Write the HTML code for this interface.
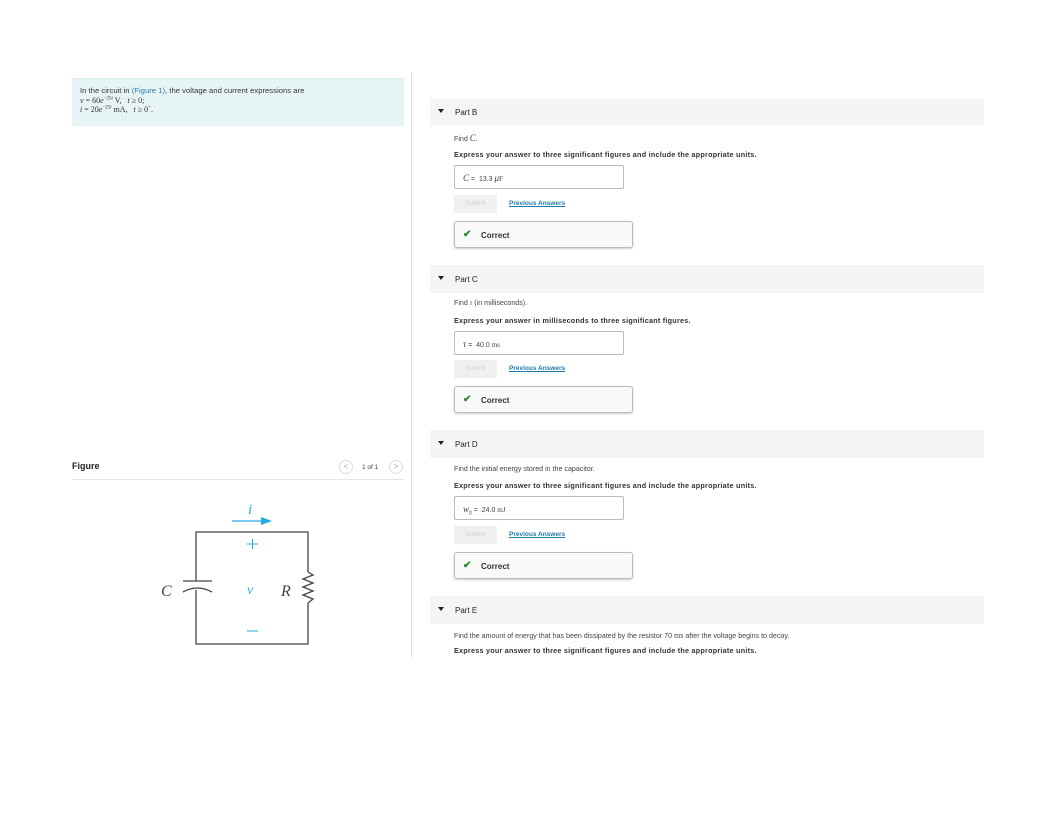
<!DOCTYPE html>
<html><head><meta charset="utf-8"><style>
*{margin:0;padding:0;box-sizing:border-box}
body{width:1056px;height:816px;background:#fff;font-family:"Liberation Sans",Arial,sans-serif;color:#333;position:relative;overflow:hidden}
.a{position:absolute}
.info{left:72px;top:78px;width:332px;height:48px;background:#e7f4f5;border-top:1px solid #d9eef0;font-size:7.7px;line-height:8px;padding:8px 0 0 8px}
.info .m{font-family:"Liberation Serif",serif;font-size:8px}
.blue{color:#2a7ab0}
.hdr{left:430px;width:554px;height:28px;background:#f5f5f5;font-size:8px;color:#222}
.hdr .t{position:absolute;left:8px;top:11px;width:0;height:0;border-left:3px solid transparent;border-right:3px solid transparent;border-top:4px solid #222}
.hdr .l{position:absolute;left:25px;top:10px}
.s{left:454px;font-size:7.1px;color:#444;white-space:nowrap}
.b{font-weight:bold;color:#333;font-size:7.2px;letter-spacing:0.25px}
.inp{left:454px;width:170px;height:24px;border:1px solid #bbb;border-radius:2px;font-size:7px;padding:7px 0 0 8px;color:#444}
.inp i{font-family:"Liberation Serif",serif;font-size:9px}
.sub{left:454px;width:43px;height:18px;background:#f0f0f0;color:#d0d0d0;font-size:6.5px;text-align:center;line-height:18px}
.prev{left:509px;font-size:6.5px;color:#1c7ab0;text-decoration:underline;font-weight:bold}
.cor{left:454px;width:179px;height:27px;border:1px solid #bbb;border-radius:3px;background:#f9f9f9;box-shadow:0 1px 2px #ccc;font-size:8px;font-weight:bold;color:#333;padding:9px 0 0 26px}
.cor b{position:absolute;left:8px;top:7px;color:#2b8a2b;font-size:10px}
</style></head><body>
<div class="a info">In the circuit in <span class="blue">(Figure 1)</span>, the voltage and current expressions are<br>
<span class="m"><i>v</i> = 60<i>e</i><sup style="font-size:5px">−25<i>t</i></sup> V, &nbsp; <i>t</i> ≥ 0;</span><br>
<span class="m"><i>i</i> = 20<i>e</i><sup style="font-size:5px">−25<i>t</i></sup> mA, &nbsp; <i>t</i> ≥ 0<sup style="font-size:5px">+</sup>.</span></div>
<div class="a" style="left:411px;top:72px;width:1px;height:585px;background:#ddd"></div>
<div class="a" style="left:72px;top:461px;font-size:9px;font-weight:bold;color:#222">Figure</div>
<div class="a" style="left:72px;top:479px;width:332px;height:1px;background:#e5e5e5"></div>
<div class="a" style="left:339px;top:460px;width:14px;height:14px;border:1px solid #ddd;border-radius:7px;font-size:8px;color:#aaa;text-align:center;line-height:12px">&lt;</div>
<div class="a" style="left:362px;top:464px;font-size:6.5px;color:#444">1 of 1</div>
<div class="a" style="left:389px;top:460px;width:14px;height:14px;border:1px solid #ddd;border-radius:7px;font-size:8px;color:#aaa;text-align:center;line-height:12px">&gt;</div>
<svg class="a" style="left:0;top:0" width="420" height="660">
<g stroke="#444" stroke-width="1.3" fill="none">
<path d="M196 581V532H308V572M308 603V644H196V590"/>
<path d="M183 581H212"/>
<path d="M183 592Q197 584 212 592"/>
<path d="M308 572L313 575L303 579L313 583L303 587L313 591L303 595L313 599L308 603"/>
</g>
<path d="M232 521H262" stroke="#29aae1" stroke-width="1.2"/>
<path d="M261 517L272 521L261 525Z" fill="#29aae1"/>
<g font-family="Liberation Serif,serif" font-style="italic">
<text x="248" y="514" font-size="15" fill="#29aae1">i</text>
<text x="247" y="594" font-size="14" fill="#29aae1">v</text>
<text x="161" y="596" font-size="16" fill="#444">C</text>
<text x="281" y="596" font-size="16" fill="#444">R</text>
</g>
<path d="M247 544H258M252.5 539V549M247 631H258" stroke="#29aae1" stroke-width="1"/>
</svg>

<div class="a hdr" style="top:98px"><div class="t"></div><div class="l">Part B</div></div>
<div class="a s" style="top:133px">Find <i style="font-family:'Liberation Serif',serif;font-size:9px">C</i>.</div>
<div class="a s b" style="top:150px">Express your answer to three significant figures and include the appropriate units.</div>
<div class="a inp" style="top:165px"><i>C</i> = &nbsp;13.3 <i>μ</i><span style="font-family:'Liberation Serif',serif">F</span></div>
<div class="a sub" style="top:195px">Submit</div>
<div class="a prev" style="top:200px">Previous Answers</div>
<div class="a cor" style="top:221px"><b>✔</b>Correct</div>

<div class="a hdr" style="top:265px"><div class="t"></div><div class="l">Part C</div></div>
<div class="a s" style="top:299px">Find <i style="font-family:'Liberation Serif',serif">τ</i> (in milliseconds).</div>
<div class="a s b" style="top:316px">Express your answer in milliseconds to three significant figures.</div>
<div class="a inp" style="top:331px"><i>τ</i> = &nbsp;40.0 <span style="font-family:'Liberation Serif',serif">ms</span></div>
<div class="a sub" style="top:360px">Submit</div>
<div class="a prev" style="top:365px">Previous Answers</div>
<div class="a cor" style="top:386px"><b>✔</b>Correct</div>

<div class="a hdr" style="top:430px"><div class="t"></div><div class="l">Part D</div></div>
<div class="a s" style="top:465px">Find the initial energy stored in the capacitor.</div>
<div class="a s b" style="top:481px">Express your answer to three significant figures and include the appropriate units.</div>
<div class="a inp" style="top:496px"><i>w</i><sub style="font-size:5px">0</sub> = &nbsp;24.0 <span style="font-family:'Liberation Serif',serif">mJ</span></div>
<div class="a sub" style="top:526px">Submit</div>
<div class="a prev" style="top:531px">Previous Answers</div>
<div class="a cor" style="top:552px"><b>✔</b>Correct</div>

<div class="a hdr" style="top:596px"><div class="t"></div><div class="l">Part E</div></div>
<div class="a s" style="top:631px">Find the amount of energy that has been dissipated by the resistor 70 <span style="font-family:'Liberation Serif',serif;font-size:8px">ms</span> after the voltage begins to decay.</div>
<div class="a s b" style="top:646px">Express your answer to three significant figures and include the appropriate units.</div>
</body></html>
